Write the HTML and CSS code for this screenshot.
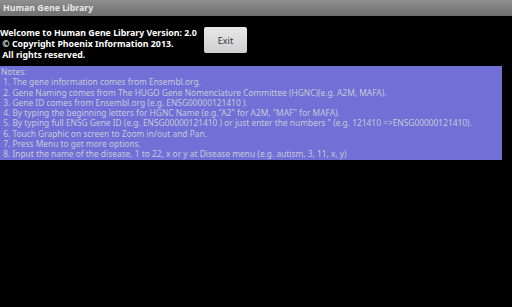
FILE: index.html
```html
<!DOCTYPE html>
<html>
<head>
<meta charset="utf-8">
<link rel="stylesheet" href="styles.css">
</head>
<body>
<div class="titlebar">Human Gene Library</div>
<div class="top">
  <div class="welcome">Welcome to Human Gene Library Version: 2.0<br>&nbsp;© Copyright Phoenix Information 2013.<br>&nbsp;All rights reserved.</div>
  <button class="exit">Exit</button>
</div>
<div class="notes">
  <div>Notes:</div>
  <div>&nbsp;1. The gene information comes from Ensembl.org.</div>
  <div>&nbsp;2. Gene Naming comes from The HUGO Gene Nomenclature Committee (HGNC)(e.g. A2M, MAFA).</div>
  <div>&nbsp;3. Gene ID comes from Ensembl.org (e.g. ENSG00000121410 ).</div>
  <div>&nbsp;4. By typing the beginning letters for HGNC Name (e.g."A2" for A2M, "MAF" for MAFA).</div>
  <div>&nbsp;5. By typing full ENSG Gene ID (e.g. ENSG00000121410 ) or just enter the numbers " (e.g. 121410 =&gt;ENSG00000121410).</div>
  <div>&nbsp;6. Touch Graphic on screen to Zoom in/out and Pan.</div>
  <div>&nbsp;7. Press Menu to get more options.</div>
  <div>&nbsp;8. Input the name of the disease, 1 to 22, x or y at Disease menu (e.g. autism, 3, 11, x, y)</div>
</div>
</body>
</html>
```
FILE: styles.css
```css
html, body {
  margin: 0;
  padding: 0;
  background: #000;
  width: 512px;
  height: 307px;
  overflow: hidden;
  font-family: "Noto Sans", "Open Sans", sans-serif;
}
.titlebar {
  height: 16px;
  background: linear-gradient(#8f8f8f, #6e6e6e);
  color: #e8e8e8;
  font-weight: bold;
  font-size: 8.8px;
  line-height: 16px;
  padding-left: 3px;
  white-space: nowrap;
}
.top {
  display: flex;
  align-items: flex-start;
  padding-top: 11px;
  height: 39px;
}
.welcome {
  color: #fff;
  font-weight: bold;
  font-size: 8.8px;
  line-height: 11px;
  padding-top: 1px;
  width: 204px;
  white-space: nowrap;
}
.exit {
  width: 43px;
  height: 26px;
  margin: 0;
  padding: 0;
  border: none;
  border-radius: 2px;
  background: linear-gradient(#e8e8e8, #cfcfcf);
  color: #333;
  font-family: "Noto Sans", sans-serif;
  font-size: 9px;
}
.notes {
  width: 502px;
  height: 94px;
  box-sizing: border-box;
  background: #7070d6;
  color: #c8c8d8;
  font-size: 8.4px;
  line-height: 10.3px;
  padding-top: 1px;
  padding-left: 1px;
  white-space: nowrap;
}
```
